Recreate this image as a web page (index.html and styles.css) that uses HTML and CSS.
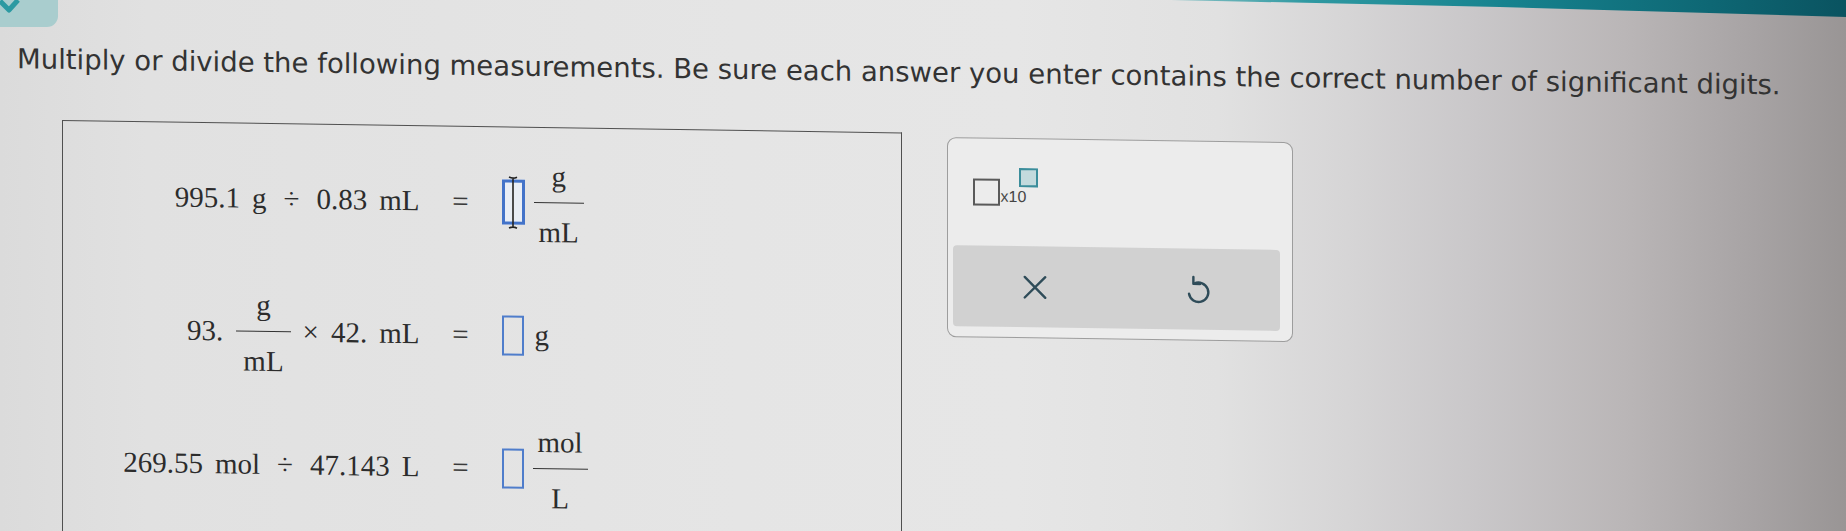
FILE: index.html
```html
<!DOCTYPE html>
<html lang="en">
<head>
<meta charset="utf-8">
<title>Significant digits</title>
<link rel="stylesheet" href="styles.css">
</head>
<body>
<header class="topbar">
  <div class="badge">
    <svg width="20" height="14" viewBox="0 0 20 14"><polyline points="0,1 9,10 18,0" fill="none" stroke="#2c9aa2" stroke-width="5" stroke-linejoin="round"/></svg>
  </div>
  <div class="topbar-spacer"></div>
  <div class="topbar-wedge"></div>
</header>
<main class="page">
  <p class="prompt">Multiply or divide the following measurements. Be sure each answer you enter contains the correct number of significant digits.</p>
  <div class="workspace">
    <section class="problems">
      <div class="eq-row">
        <div class="lhs">
          <span>995.1</span><span class="sp">g</span><span class="op">÷</span><span>0.83</span><span class="sp">mL</span>
        </div>
        <div class="eq">=</div>
        <div class="rhs">
          <span class="answer focused">
            <svg class="ibeam" width="12" height="54" viewBox="0 0 12 54"><path d="M2 1.5 Q6 3.5 10 1.5 M6 3 V51 M2 52.5 Q6 50.5 10 52.5" fill="none" stroke="#222" stroke-width="1.6"/></svg>
          </span>
          <span class="frac"><span class="frac-num">g</span><span class="frac-den">mL</span></span>
        </div>
      </div>
      <div class="eq-row">
        <div class="lhs">
          <span>93.</span><span class="frac wide"><span class="frac-num">g</span><span class="frac-den">mL</span></span><span class="times">×</span><span>42.</span><span class="sp">mL</span>
        </div>
        <div class="eq">=</div>
        <div class="rhs">
          <span class="answer"></span><span class="unit">g</span>
        </div>
      </div>
      <div class="eq-row">
        <div class="lhs">
          <span>269.55</span><span class="sp">mol</span><span class="op">÷</span><span>47.143</span><span class="sp">L</span>
        </div>
        <div class="eq">=</div>
        <div class="rhs">
          <span class="answer"></span>
          <span class="frac"><span class="frac-num">mol</span><span class="frac-den">L</span></span>
        </div>
      </div>
    </section>
    <aside class="tools">
      <div class="sci">
        <span class="sci-base"></span><span class="sci-x">x10</span><span class="sci-exp"></span>
      </div>
      <div class="actions">
        <button class="action" type="button" aria-label="Clear">
          <svg width="26" height="26" viewBox="0 0 24 24"><path d="M2.5 2.5 L21.5 21.5 M21.5 2.5 L2.5 21.5" fill="none" stroke="#2f4c59" stroke-width="2.2" stroke-linecap="round"/></svg>
        </button>
        <button class="action" type="button" aria-label="Undo">
          <svg width="30" height="34" viewBox="0 0 24 28"><path d="M8.2 3.6 V9.2 H13.6" fill="none" stroke="#2f4c59" stroke-width="2" stroke-linecap="round" stroke-linejoin="round"/><path d="M8.9 8.9 A8 8 0 1 1 4.6 17.4" fill="none" stroke="#2f4c59" stroke-width="2" stroke-linecap="round"/></svg>
        </button>
      </div>
    </aside>
  </div>
</main>
</body>
</html>
```

FILE: styles.css
```css
* { box-sizing: border-box; }

html, body {
  margin: 0;
  padding: 0;
}

body {
  width: 1846px;
  height: 531px;
  overflow: hidden;
  font-family: "DejaVu Sans", "Liberation Sans", sans-serif;
  background: linear-gradient(90deg,
    #dbdbdb 0%,
    #e1e1e1 8%,
    #e5e5e5 40%,
    #e6e6e6 55%,
    #e1e1e1 66%,
    #d6d5d6 73%,
    #c9c7c9 80%,
    #bab6b7 88%,
    #a7a3a4 95%,
    #999595 100%);
}

/* top strip */
.topbar {
  display: flex;
  align-items: flex-start;
  height: 27px;
}

.badge {
  width: 58px;
  height: 27px;
  background: #a9cdce;
  border-bottom-right-radius: 11px;
}

.badge svg { display: block; }

.topbar-spacer { flex: 1; }

.topbar-wedge {
  width: 675px;
  height: 17px;
  background: linear-gradient(90deg, #8cc3c6 0%, #2f99a2 20%, #16828e 50%, #0e6774 80%, #0a5360 100%);
  clip-path: polygon(0 0, 100% 0, 100% 100%, 48.7% 41%);
}

/* page content, slightly sheared like the photographed screen */
.page {
  transform: skewY(0.85deg);
  transform-origin: 0 0;
}

.prompt {
  margin: 15px 0 0 17px;
  font-size: 27.5px;
  line-height: 32px;
  color: #333;
  white-space: nowrap;
}

.workspace {
  display: flex;
  align-items: flex-start;
  margin-top: 45px;
  padding-left: 62px;
}

/* problems box */
.problems {
  width: 840px;
  height: 440px;
  border: 1.5px solid #505050;
  border-bottom: none;
  padding-top: 29.5px;
  display: flex;
  flex-direction: column;
  gap: 43px;
}

.eq-row {
  display: grid;
  grid-template-columns: 356.5px 82px auto;
  align-items: center;
  height: 90px;
  font-family: "Liberation Serif", "Times New Roman", serif;
  font-size: 29px;
  line-height: 1;
  color: #2c2c2c;
}

.lhs {
  display: flex;
  justify-content: flex-end;
  align-items: center;
}

.eq {
  text-align: center;
  color: #3a3a3a;
}

.rhs {
  display: flex;
  align-items: center;
}

.sp { margin-left: 12px; }

.op { margin: 0 17px; }

.times { margin: 0 12px; }

.frac {
  display: inline-flex;
  flex-direction: column;
  align-items: stretch;
  text-align: center;
}

.frac-num {
  padding: 4px 5px 11px;
  border-bottom: 1.5px solid #333;
}

.frac-den {
  padding: 15px 5px 0;
}

.lhs .frac { margin-left: 13px; }

.frac.wide .frac-num,
.frac.wide .frac-den {
  padding-left: 7px;
  padding-right: 7px;
}

.rhs .frac { margin-left: 9px; }

.unit { margin-left: 11px; }

.answer {
  display: inline-block;
  width: 22px;
  height: 40px;
  border: 2px solid #4f7dcb;
}

.answer.focused {
  position: relative;
  width: 23px;
  height: 45px;
  border: 3px solid #4373c9;
  background: #e9eef6;
}

.ibeam {
  position: absolute;
  left: 2.5px;
  top: -7px;
}

/* side tools panel */
.tools {
  width: 346px;
  height: 200px;
  margin-left: 45px;
  margin-top: 4px;
  border: 1.5px solid #9d9d9d;
  border-radius: 9px;
  background: #ececec;
  display: flex;
  flex-direction: column;
}

.sci {
  height: 107px;
  display: flex;
  align-items: flex-start;
  padding: 28.5px 0 0 24.5px;
}

.sci-base {
  width: 27px;
  height: 27px;
  margin-top: 11.5px;
  border: 2px solid #5a5a5a;
}

.sci-x {
  margin-top: 21px;
  margin-left: 1px;
  font-family: "Liberation Sans", Arial, sans-serif;
  font-size: 16px;
  line-height: 16px;
  color: #454545;
}

.sci-exp {
  width: 19px;
  height: 19px;
  margin-left: -7px;
  border: 2px solid #3b8d9b;
  background: #c3dadd;
}

.actions {
  height: 81px;
  margin: 0 12px 9px 5px;
  background: #d1d1d1;
  border-radius: 4px;
  display: flex;
}

.action {
  flex: 1;
  display: flex;
  align-items: center;
  justify-content: center;
  border: none;
  background: transparent;
  padding: 0;
}

.action svg { display: block; }
```
